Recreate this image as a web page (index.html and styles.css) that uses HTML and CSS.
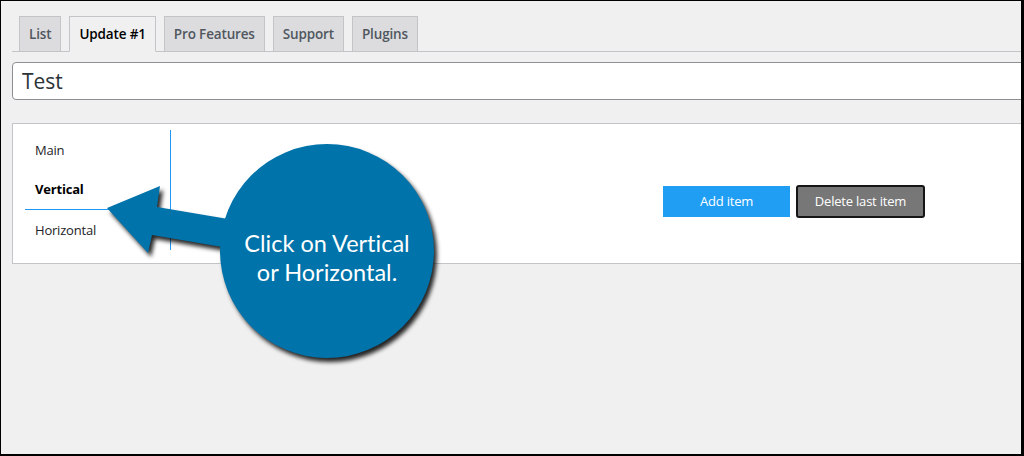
FILE: index.html
```html
<!DOCTYPE html>
<html>
<head>
<meta charset="utf-8">
<link rel="stylesheet" href="styles.css">
</head>
<body>
<div class="frame">
  <nav class="tabs">
    <span class="tab">List</span>
    <span class="tab active">Update #1</span>
    <span class="tab">Pro Features</span>
    <span class="tab">Support</span>
    <span class="tab">Plugins</span>
  </nav>
  <div class="title-input">Test</div>
  <section class="panel">
    <ul class="menu">
      <li class="menu-item">Main</li>
      <li class="menu-item selected">Vertical</li>
      <li class="menu-item">Horizontal</li>
    </ul>
    <div class="actions">
      <button class="btn btn-add">Add item</button>
      <button class="btn btn-delete">Delete last item</button>
    </div>
  </section>

  <div class="callout">
    <svg class="callout-shape" width="1024" height="456" viewBox="0 0 1024 456">
      <g class="shape">
        <polygon points="107,208 160,186 157,207 240,221 240,250 152,235 148,253"/>
        <circle cx="327" cy="251" r="107"/>
      </g>
    </svg>
    <div class="callout-text">Click on Vertical<br>or Horizontal.</div>
  </div>
</div>
</body>
</html>
```

FILE: styles.css
```css
* { box-sizing: border-box; }
html, body { margin: 0; padding: 0; }
body {
  width: 1024px;
  height: 456px;
  overflow: hidden;
  font-family: "Open Sans", "Noto Sans", sans-serif;
  background: #000;
}
.frame {
  position: relative;
  width: 1024px;
  height: 456px;
  background: #f0f0f1;
  border-style: solid;
  border-color: #000;
  border-width: 1px 3px 2px 1px;
  overflow: hidden;
  padding-left: 11px;
}
.tabs {
  display: flex;
  gap: 8px;
  padding: 15px 0 0 7px;
  border-bottom: 1px solid #c3c4c7;
  width: 1030px;
}
.tab {
  display: block;
  height: 36px;
  margin-bottom: -1px;
  padding: 0 9px;
  line-height: 34px;
  font-size: 13.5px;
  font-weight: 600;
  color: #50575e;
  background: #dcdcde;
  border: 1px solid #c3c4c7;
  letter-spacing: -0.15px;
}
.tab.active {
  background: #f0f0f1;
  border-bottom-color: #f0f0f1;
  color: #000;
}
.title-input {
  margin-top: 10px;
  width: 1030px;
  height: 38px;
  border: 1px solid #8c8f94;
  border-radius: 4px;
  background: #fff;
  padding-left: 9px;
  font-size: 21px;
  line-height: 36px;
  color: #2c3338;
}
.panel {
  margin-top: 23px;
  width: 1030px;
  height: 141px;
  background: #fff;
  border: 1px solid #c3c4c7;
  display: flex;
  align-items: flex-start;
  padding: 6px 0 0 12px;
}
.menu {
  list-style: none;
  margin: 0;
  padding: 0;
  width: 146px;
  height: 120px;
  border-right: 1px solid #2196f3;
}
.menu-item {
  height: 40px;
  line-height: 40px;
  padding-left: 10px;
  font-size: 13px;
  color: #1d2327;
  letter-spacing: -0.2px;
}
.menu-item.selected {
  font-weight: 700;
  color: #000;
  border-bottom: 1px solid #2196f3;
  line-height: 39px;
}
.actions {
  display: flex;
  align-items: center;
  gap: 6px;
  padding-left: 492px;
  height: 142px;
  margin-top: -6px;
  padding-top: 12px;
}
.btn {
  font-family: "Open Sans", "Noto Sans", sans-serif;
  font-size: 13px;
  color: #fff;
  cursor: pointer;
  letter-spacing: -0.2px;
}
.btn-add {
  width: 127px;
  height: 31px;
  border: none;
  background: #1f9ef4;
}
.btn-delete {
  width: 129px;
  height: 33px;
  background: #777;
  border: 2px solid #151515;
  border-radius: 3px;
}
.callout {
  position: absolute;
  left: -1px;
  top: -1px;
  width: 1024px;
  height: 456px;
  pointer-events: none;
}
.callout-shape {
  position: absolute;
  left: 0;
  top: 0;
}
.shape {
  fill: #0073aa;
  filter: drop-shadow(3px 4px 2px rgba(0,0,0,0.85));
}
.callout-text {
  position: absolute;
  left: 220px;
  top: 229px;
  width: 214px;
  text-align: center;
  font-family: "Lato", "Open Sans", sans-serif;
  font-size: 23.5px;
  line-height: 29px;
  color: #fff;
  font-variant-ligatures: none;
}
```
